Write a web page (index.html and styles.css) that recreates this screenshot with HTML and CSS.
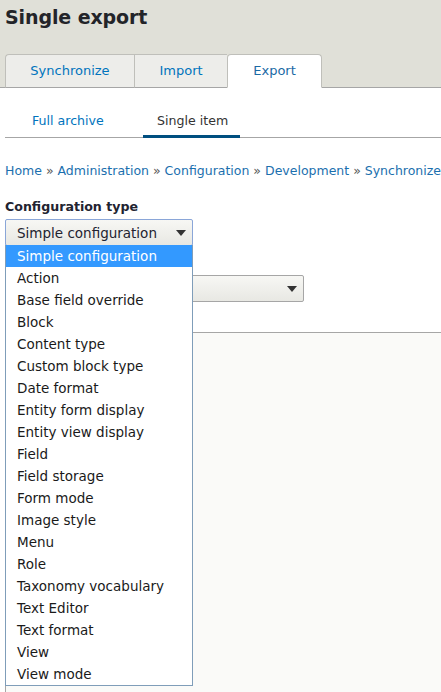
FILE: index.html
```html
<!DOCTYPE html>
<html>
<head>
<meta charset="utf-8">
<link rel="stylesheet" href="styles.css">
</head>
<body>
<header class="page-header">
  <h1 class="title">Single export</h1>
  <nav class="tabs">
    <a class="tab">Synchronize</a>
    <a class="tab tab-import">Import</a>
    <a class="tab tab-active">Export</a>
  </nav>
</header>
<main class="content">
  <nav class="subtabs">
    <a class="subtab">Full archive</a>
    <a class="subtab subtab-active">Single item</a>
  </nav>
  <div class="breadcrumb">
    <a>Home</a> » <a>Administration</a> » <a>Configuration</a> » <a>Development</a> » <a>Synchronize</a>
  </div>
  <form class="form">
    <div class="field field-type">
      <label class="label">Configuration type</label>
      <div class="select select-type">
        <span class="select-text">Simple configuration</span>
        <span class="arrow"></span>
      </div>
      <ul class="dropdown">
        <li class="opt opt-selected">Simple configuration</li>
        <li class="opt">Action</li>
        <li class="opt">Base field override</li>
        <li class="opt">Block</li>
        <li class="opt">Content type</li>
        <li class="opt">Custom block type</li>
        <li class="opt">Date format</li>
        <li class="opt">Entity form display</li>
        <li class="opt">Entity view display</li>
        <li class="opt">Field</li>
        <li class="opt">Field storage</li>
        <li class="opt">Form mode</li>
        <li class="opt">Image style</li>
        <li class="opt">Menu</li>
        <li class="opt">Role</li>
        <li class="opt">Taxonomy vocabulary</li>
        <li class="opt">Text Editor</li>
        <li class="opt">Text format</li>
        <li class="opt">View</li>
        <li class="opt">View mode</li>
      </ul>
    </div>
    <div class="field field-name">
      <div class="select select-name">
        <span class="select-text"></span>
        <span class="arrow"></span>
      </div>
    </div>
    <div class="textarea"></div>
  </form>
</main>
</body>
</html>
```

FILE: styles.css
```css
html, body {
  margin: 0;
  padding: 0;
  background: #fff;
  font-family: "DejaVu Sans", Verdana, sans-serif;
  color: #222330;
  overflow: hidden;
  height: 692px;
}

.page-header {
  background: #e0e0d8;
  border-bottom: 1px solid #a6a6a6;
  display: flex;
  flex-direction: column;
  box-sizing: border-box;
  height: 88px;
}

.title {
  margin: 0;
  padding: 3px 0 0 5px;
  font-size: 19px;
  font-weight: bold;
  line-height: 28px;
  color: #232429;
  letter-spacing: -0.1px;
}

.tabs {
  display: flex;
  margin-top: auto;
  margin-left: 5px;
  margin-bottom: -1px;
}

.tab {
  box-sizing: border-box;
  height: 34px;
  display: flex;
  align-items: center;
  justify-content: center;
  background: #ededea;
  border: 1px solid #bfbfba;
  border-bottom: 1px solid #a6a6a6;
  border-right: none;
  border-radius: 4px 0 0 0;
  font-size: 13px;
  color: #0074bd;
  width: 129px;
  padding-bottom: 1px;
}

.tab-import {
  width: 93px;
  border-radius: 0;
}

.tab-active {
  width: 95px;
  background: #fff;
  border-bottom-color: #fff;
  border-right: 1px solid #bfbfba;
  border-radius: 4px 4px 0 0;
  color: #1b6aa5;
}

.content {
  padding: 0 0 0 5px;
}

.subtabs {
  display: flex;
  border-bottom: 1px solid #a6a6a6;
  height: 50px;
  box-sizing: border-box;
}

.subtab {
  font-size: 12.6px;
  color: #0074bd;
  padding: 25px 0 0 0;
  line-height: 16px;
  box-sizing: border-box;
}

.subtab:first-child {
  margin-left: 27px;
  width: 111px;
}

.subtab-active {
  color: #333;
  width: 97px;
  padding-left: 14px;
  border-bottom: 3px solid #004f80;
  margin-bottom: -1px;
}

.breadcrumb {
  font-size: 12.5px;
  line-height: 16px;
  margin-top: 25px;
  color: #555;
  white-space: nowrap;
}

.breadcrumb a {
  color: #1b6fae;
}

.form {
  margin-top: 20px;
}

.field {
  position: relative;
}

.label {
  display: block;
  font-size: 12.6px;
  font-weight: bold;
  line-height: 16px;
  color: #222330;
}

.select {
  box-sizing: border-box;
  height: 27px;
  margin-top: 4px;
  border: 1px solid #a6a6a6;
  border-radius: 2px;
  background: linear-gradient(#f7f7f4, #e8e8e3);
  display: flex;
  align-items: center;
  font-size: 13.5px;
  color: #222330;
  padding-left: 11px;
}

.select-type {
  width: 188px;
  border-color: #8aa6d8;
}

.select-name {
  width: 299px;
}

.select-text {
  flex: 1;
}

.arrow {
  width: 0;
  height: 0;
  border-left: 5px solid transparent;
  border-right: 5px solid transparent;
  border-top: 6px solid #333;
  margin-right: 6px;
}

.dropdown {
  position: absolute;
  left: 0;
  top: 46px;
  width: 188px;
  box-sizing: border-box;
  margin: 0;
  padding: 0;
  list-style: none;
  background: #fff;
  border: 1px solid #7f9db9;
  border-top: none;
  z-index: 5;
}

.opt {
  height: 22px;
  line-height: 22px;
  font-size: 13.5px;
  padding-left: 11px;
  color: #1a1a1a;
  white-space: nowrap;
}

.opt-selected {
  background: #3399ff;
  color: #fff;
}

.field-name {
  margin-top: 29px;
}

.textarea {
  margin-top: 30px;
  height: 400px;
  border-top: 1px solid #a6a6a6;
  border-left: 1px solid #a6a6a6;
  background: #fafaf8;
}
```
